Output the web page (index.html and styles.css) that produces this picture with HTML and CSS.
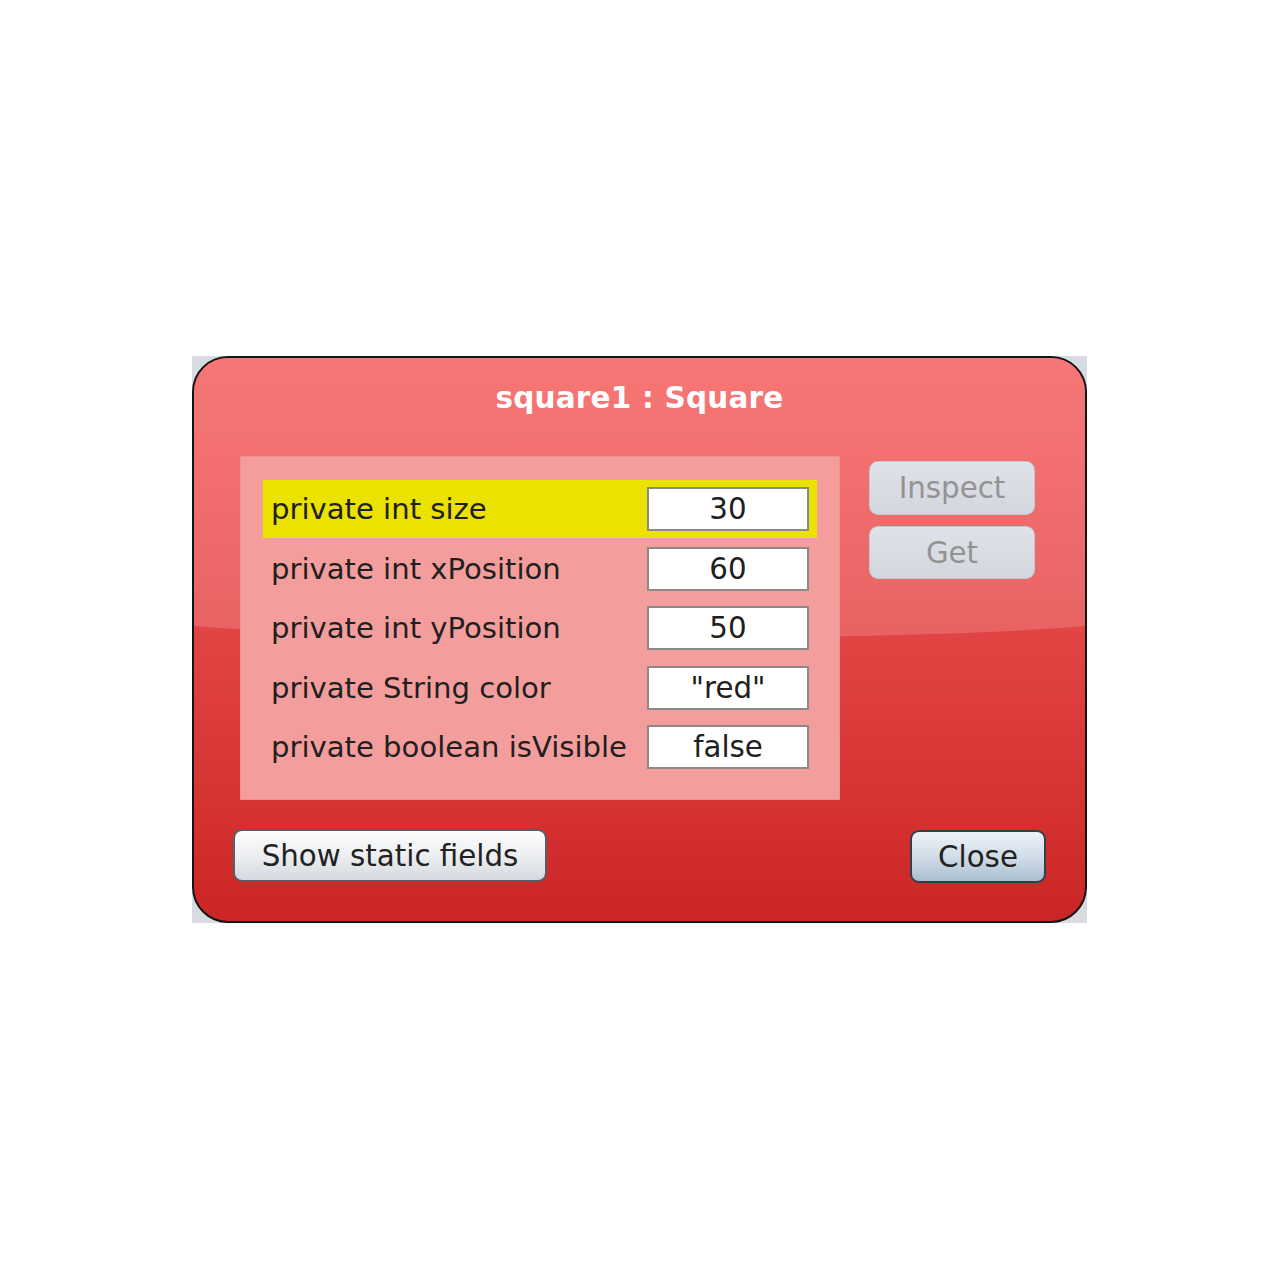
FILE: index.html
```html
<!DOCTYPE html>
<html>
<head>
<meta charset="utf-8">
<link rel="stylesheet" href="styles.css">
</head>
<body>
<div class="window">
  <div class="frame">
    <div class="title">square1 : Square</div>
    <div class="main">
      <div class="fields">
        <div class="row selected"><span class="label">private int size</span><span class="value">30</span></div>
        <div class="row"><span class="label">private int xPosition</span><span class="value">60</span></div>
        <div class="row"><span class="label">private int yPosition</span><span class="value">50</span></div>
        <div class="row"><span class="label">private String color</span><span class="value">"red"</span></div>
        <div class="row"><span class="label">private boolean isVisible</span><span class="value">false</span></div>
      </div>
      <div class="side">
        <button class="btn disabled inspect">Inspect</button>
        <button class="btn disabled get">Get</button>
      </div>
    </div>
    <div class="footer">
      <button class="btn plain">Show static fields</button>
      <button class="btn primary">Close</button>
    </div>
  </div>
</div>
</body>
</html>
```

FILE: styles.css
```css
html, body {
  margin: 0;
  padding: 0;
  background: #ffffff;
}
body {
  font-family: "DejaVu Sans", "Liberation Sans", sans-serif;
}
.window {
  margin-left: 192px;
  margin-top: 356px;
  width: 895px;
  height: 567px;
  background: #d8dbe2;
}
.frame {
  position: relative;
  box-sizing: border-box;
  width: 895px;
  height: 567px;
  border: 2px solid #141414;
  border-radius: 36px;
  overflow: hidden;
  background: linear-gradient(to bottom, #e54a4a 0px, #e24545 265px, #d83535 420px, #cb2525 563px);
  display: flex;
  flex-direction: column;
}
.frame::before {
  content: "";
  position: absolute;
  left: -40px;
  right: -40px;
  top: 0;
  height: 280px;
  background: linear-gradient(to bottom, #f67777 0%, #f06c6c 55%, #e86262 100%);
  border-radius: 0 0 50% 50% / 0 0 20px 20px;
  z-index: 0;
}
.title, .main, .footer {
  position: relative;
  z-index: 1;
}
.title {
  height: 80px;
  line-height: 80px;
  text-align: center;
  color: #ffffff;
  font-weight: bold;
  font-size: 29.5px;
  letter-spacing: 0.2px;
  margin-bottom: 18px;
}
.main {
  display: flex;
  padding-left: 46px;
  gap: 29px;
}
.fields {
  box-sizing: border-box;
  width: 600px;
  height: 344px;
  background: #f49d9d;
  box-shadow: inset 0 0 0 1px #ee9090;
  padding: 24px 23px 0 23px;
  display: flex;
  flex-direction: column;
  gap: 1.5px;
}
.row {
  height: 58px;
  display: flex;
  align-items: center;
  justify-content: space-between;
  padding: 0 8px;
}
.row.selected {
  background: #ebe200;
}
.label {
  font-size: 29.1px;
  color: #202020;
  white-space: nowrap;
}
.value {
  box-sizing: border-box;
  width: 162px;
  height: 44px;
  background: #ffffff;
  border: 2px solid #8a8a8a;
  font-size: 29.3px;
  color: #202020;
  display: flex;
  align-items: center;
  justify-content: center;
}
.side {
  display: flex;
  flex-direction: column;
  padding-top: 5px;
  gap: 11px;
}
.btn {
  box-sizing: border-box;
  font-family: "DejaVu Sans", "Liberation Sans", sans-serif;
  font-size: 29.3px;
  border-radius: 9px;
  padding: 0;
  margin: 0;
  display: flex;
  align-items: center;
  justify-content: center;
}
.btn.disabled {
  width: 166px;
  height: 54px;
  background: linear-gradient(to bottom, #dfe2e8, #d3d6dd);
  border: 1.5px solid #c4c7ce;
  color: #939393;
}
.btn.get {
  height: 53px;
}
.footer {
  display: flex;
  justify-content: space-between;
  align-items: flex-start;
  padding: 0 39px;
  margin-top: 29px;
}
.btn.plain {
  width: 314px;
  height: 53px;
  background: linear-gradient(to bottom, #fdfdfd 0%, #eceef1 50%, #d5d9df 100%);
  border: 2px solid #5a5d62;
  color: #222222;
}
.btn.primary {
  width: 136px;
  height: 53px;
  margin-top: 1px;
  background: linear-gradient(to bottom, #edf2f7 0%, #d2dde8 50%, #a9bfd1 100%);
  border: 2px solid #33404c;
  color: #222222;
}
```
